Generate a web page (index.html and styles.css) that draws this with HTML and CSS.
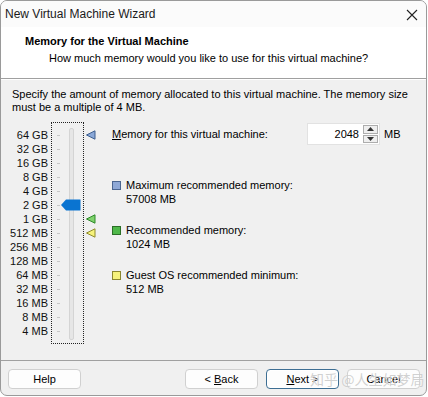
FILE: index.html
```html
<!DOCTYPE html>
<html lang="en">
<head>
    <meta charset="UTF-8">
    <title>New Virtual Machine Wizard</title>
    <link rel="stylesheet" href="styles.css">
</head>
<body>
    <div class="window">
        <div class="titlebar">
            <span class="title">New Virtual Machine Wizard</span>
            <svg class="close" width="12" height="12" viewBox="0 0 12 12">
                <path d="M1 1 L11 11 M11 1 L1 11" stroke="#222" stroke-width="1.1" fill="none"/>
            </svg>
        </div>

        <div class="header">
            <h1>Memory for the Virtual Machine</h1>
            <p>How much memory would you like to use for this virtual machine?</p>
        </div>

        <div class="content">
            <p class="intro">Specify the amount of memory allocated to this virtual machine. The memory size must be a multiple of 4&nbsp;MB.</p>

            <div class="main">
                <div class="scale">
                    <div class="labels">
                        <div>64 GB</div>
                        <div>32 GB</div>
                        <div>16 GB</div>
                        <div>8 GB</div>
                        <div>4 GB</div>
                        <div>2 GB</div>
                        <div>1 GB</div>
                        <div>512 MB</div>
                        <div>256 MB</div>
                        <div>128 MB</div>
                        <div>64 MB</div>
                        <div>32 MB</div>
                        <div>16 MB</div>
                        <div>8 MB</div>
                        <div>4 MB</div>
                    </div>

                    <!-- Slider -->
                    <div class="slider">
                        <div class="ticks">
                            <i></i><i></i><i></i><i></i><i></i>
                            <i></i><i></i><i></i><i></i><i></i>
                            <i></i><i></i><i></i><i></i><i></i>
                        </div>
                        <div class="track"></div>
                        <svg class="thumb" width="20" height="12" viewBox="0 0 20 12">
                            <path d="M0 6 L5 0.5 H19.5 V11.5 H5 Z" fill="#0a74d1"/>
                        </svg>
                    </div>

                    <div class="markers">
                        <div class="marker">
                            <svg width="10" height="10" viewBox="0 0 10 10"><path d="M0.5 5 L9 0.8 V9.2 Z" fill="#8aa8d8" stroke="#3e5f8f"/></svg>
                        </div>
                        <div></div><div></div><div></div><div></div><div></div>
                        <div class="marker">
                            <svg width="10" height="10" viewBox="0 0 10 10"><path d="M0.5 5 L9 0.8 V9.2 Z" fill="#7fd26c" stroke="#2f8a2a"/></svg>
                        </div>
                        <div class="marker">
                            <svg width="10" height="10" viewBox="0 0 10 10"><path d="M0.5 5 L9 0.8 V9.2 Z" fill="#f6f27a" stroke="#8e8a2c"/></svg>
                        </div>
                    </div>
                </div>

                <div class="info">
                    <div class="mem-row">
                        <span class="mem-label"><u>M</u>emory for this virtual machine:</span>
                        <div class="spin">
                            <span class="spin-value">2048</span>
                            <div class="spin-btns">
                                <div class="spin-btn"><svg width="7" height="4" viewBox="0 0 7 4"><path d="M0 4 L3.5 0 L7 4 Z" fill="#333"/></svg></div>
                                <div class="spin-btn"><svg width="7" height="4" viewBox="0 0 7 4"><path d="M0 0 L3.5 4 L7 0 Z" fill="#333"/></svg></div>
                            </div>
                        </div>
                        <span class="unit">MB</span>
                    </div>

                    <div class="legend">
                        <span class="swatch blue"></span>
                        <div>
                            <div>Maximum recommended memory:</div>
                            <div>57008 MB</div>
                        </div>
                    </div>
                    <div class="legend">
                        <span class="swatch green"></span>
                        <div>
                            <div>Recommended memory:</div>
                            <div>1024 MB</div>
                        </div>
                    </div>
                    <div class="legend">
                        <span class="swatch yellow"></span>
                        <div>
                            <div>Guest OS recommended minimum:</div>
                            <div>512 MB</div>
                        </div>
                    </div>
                </div>
            </div>
        </div>

        <div class="footer">
            <button class="btn">Help</button>
            <div class="spacer"></div>
            <button class="btn">&lt; <u>B</u>ack</button>
            <button class="btn default"><u>N</u>ext &gt;</button>
            <button class="btn">Cancel</button>
        </div>

        <div class="watermark">知乎 @人生如梦局</div>
    </div>
</body>
</html>
```

FILE: styles.css
```css
body {
    margin: 0;
    background-color: #fff;
    font-family: "Liberation Sans", Arial, sans-serif;
    font-size: 11px;
    color: #000;
}
.window {
    position: relative;
    width: 425px;
    height: 394px;
    border: 1px solid #9a9a9a;
    border-radius: 7px;
    overflow: hidden;
    display: flex;
    flex-direction: column;
    background-color: #f0f0f0;
}
.titlebar {
    height: 26px;
    display: flex;
    align-items: center;
    justify-content: space-between;
    padding: 0 8px 0 4px;
    background-color: #fbfbfb;
}
.title {
    font-size: 12px;
    color: #1a1a1a;
}
.close {
    margin-top: 1px;
}
.header {
    height: 52px;
    background-color: #fff;
    border-bottom: 1px solid #a0a0a0;
    padding-left: 24px;
    box-sizing: border-box;
    padding-top: 7px;
}
.header h1 {
    margin: 0;
    font-size: 11px;
    font-weight: bold;
    line-height: 14px;
}
.header p {
    margin: 3px 0 0 24px;
    line-height: 14px;
}
.content {
    flex: 1;
    padding: 8px 12px 0 6px;
    border-top: 1px solid #fff;
}
.intro {
    margin: 0 0 0 5px;
    line-height: 13px;
}
.main {
    display: flex;
    margin-top: 8px;
}
.scale {
    display: flex;
}
.labels {
    width: 41px;
    padding-top: 6px;
    text-align: right;
    white-space: nowrap;
    color: #111;
}
.labels div, .markers div {
    height: 14px;
    line-height: 14px;
}
/* Slider */
.slider {
    position: relative;
    display: flex;
    margin-left: 3px;
    height: 222px;
    width: 33px;
    box-sizing: border-box;
    border: 1px dotted #222;
    padding: 5px 0 0 5px;
}
.ticks {
    display: flex;
    flex-direction: column;
}
.ticks i {
    display: block;
    height: 14px;
    width: 3px;
    background: linear-gradient(#c8c8c8, #c8c8c8) no-repeat 0 7px / 3px 1px;
}
.track {
    width: 3px;
    margin: 0 0 0 9px;
    height: 210px;
    background-color: #e6e6e6;
    border: 1px solid #d4d4d4;
    border-radius: 2px;
}
.thumb {
    position: absolute;
    left: 9px;
    top: 76px;
}
.markers {
    margin-left: 2px;
    padding-top: 6px;
}
.marker {
    display: flex;
    align-items: center;
}
.info {
    margin-left: 16px;
    flex: 1;
}
.mem-row {
    display: flex;
    align-items: center;
    height: 22px;
    margin-top: 1px;
}
.mem-label u, .btn u {
    text-decoration: underline;
}
.mem-label {
    width: 195px;
}
.spin {
    display: flex;
    height: 22px;
    width: 73px;
    box-sizing: border-box;
    background-color: #fff;
    border: 1px solid #e2e2e2;
}
.spin-value {
    flex: 1;
    text-align: right;
    line-height: 20px;
    padding-right: 4px;
}
.spin-btns {
    width: 15px;
    display: flex;
    flex-direction: column;
    gap: 1px;
    padding: 1px 1px 1px 0;
}
.spin-btn {
    flex: 1;
    display: flex;
    align-items: center;
    justify-content: center;
    background-color: #efefef;
    border: 1px solid #adadad;
}
.unit {
    margin-left: 4px;
}
.legend {
    display: flex;
    line-height: 14px;
    margin-top: 33px;
}
.legend + .legend {
    margin-top: 17px;
}
.swatch {
    width: 7px;
    height: 7px;
    border: 1px solid;
    margin: 3px 5px 0 0;
}
.swatch.blue { background-color: #8ea8d6; border-color: #4a6590; }
.swatch.green { background-color: #4fb84a; border-color: #2b6e27; }
.swatch.yellow { background-color: #f5f27c; border-color: #8a8630; }
/* Botones */
.footer {
    display: flex;
    gap: 8px;
    height: 35px;
    box-sizing: border-box;
    border-top: 1px solid #a0a0a0;
    padding: 8px 6px 0 7px;
}
.spacer {
    flex: 1;
}
.btn {
    width: 73px;
    height: 20px;
    font-family: inherit;
    font-size: 11px;
    background-color: #fdfdfd;
    border: 1px solid #d0d0d0;
    border-radius: 4px;
    padding: 0;
    color: #000;
}
.btn.default {
    border-color: #3d6e93;
    box-shadow: inset 0 0 0 1px #fff;
}
.watermark {
    position: absolute;
    left: 309px;
    top: 368px;
    white-space: nowrap;
    font-family: "Noto Sans CJK SC", sans-serif;
    font-size: 14px;
    color: rgba(170, 170, 170, 0.55);
    text-shadow: 0 0 1px #fff;
    pointer-events: none;
}
```
